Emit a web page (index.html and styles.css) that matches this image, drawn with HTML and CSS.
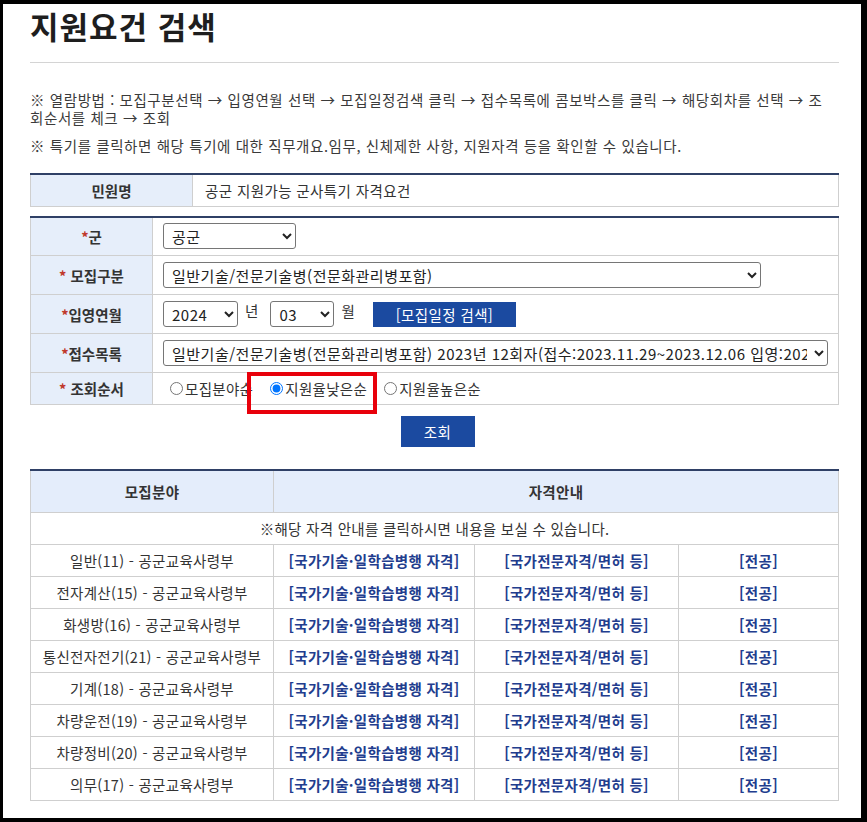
FILE: index.html
```html
<!DOCTYPE html>
<html lang="ko">
<head>
    <meta charset="UTF-8">
    <meta name="viewport" content="width=device-width, initial-scale=1.0">
    <title>지원요건 검색</title>
    <link rel="stylesheet" href="styles.css">
</head>
<body>
    <div class="frame">
        <div class="page">
            <h1>지원요건 검색</h1>
            <hr class="rule">

            <p class="note">※ 열람방법 : 모집구분선택 → 입영연월 선택 → 모집일정검색 클릭 → 접수목록에 콤보박스를 클릭 → 해당회차를 선택 → 조<br>회순서를 체크 → 조회</p>
            <p class="note note-gap">※ 특기를 클릭하면 해당 특기에 대한 직무개요.임무, 신체제한 사항, 지원자격 등을 확인할 수 있습니다.</p>

            <table class="tbl tbl-title">
                <tr>
                    <th class="th-title">민원명</th>
                    <td class="td-pad">공군 지원가능 군사특기 자격요건</td>
                </tr>
            </table>

            <table class="tbl tbl-form">
                <tr class="row-form">
                    <th class="th-form"><span class="req">*</span>군</th>
                    <td>
                        <select class="sel sel-gun">
                            <option>공군</option>
                        </select>
                    </td>
                </tr>
                <tr class="row-form">
                    <th class="th-form"><span class="req">*</span> 모집구분</th>
                    <td>
                        <select class="sel sel-gubun">
                            <option>일반기술/전문기술병(전문화관리병포함)</option>
                        </select>
                    </td>
                </tr>
                <tr class="row-form">
                    <th class="th-form"><span class="req">*</span>입영연월</th>
                    <td>
                        <select class="sel sel-year">
                            <option>2024</option>
                        </select>
                        <span class="unit">년</span>
                        <select class="sel sel-month">
                            <option>03</option>
                        </select>
                        <span class="unit">월</span>
                        <button class="btn btn-search">[모집일정 검색]</button>
                    </td>
                </tr>
                <tr class="row-form">
                    <th class="th-form"><span class="req">*</span>접수목록</th>
                    <td>
                        <select class="sel sel-list">
                            <option>일반기술/전문기술병(전문화관리병포함) 2023년 12회자(접수:2023.11.29~2023.12.06 입영:2024년03월)</option>
                        </select>
                    </td>
                </tr>
                <tr class="row-order">
                    <th class="th-form"><span class="req">*</span> 조회순서</th>
                    <td>
                        <label class="radio"><input type="radio" name="order">모집분야순</label>
                        <label class="radio"><input type="radio" name="order" checked>지원율낮은순</label>
                        <label class="radio"><input type="radio" name="order">지원율높은순</label>
                    </td>
                </tr>
            </table>

            <div class="btn-row">
                <button class="btn btn-go">조회</button>
            </div>

            <table class="tbl tbl-result">
                <colgroup>
                    <col class="c1"><col class="c2"><col class="c3"><col class="c4">
                </colgroup>
                <tr class="row-head">
                    <th>모집분야</th>
                    <th colspan="3">자격안내</th>
                </tr>
                <tr class="row-info">
                    <td colspan="4">※해당 자격 안내를 클릭하시면 내용을 보실 수 있습니다.</td>
                </tr>
                <tr class="row-data">
                    <td>일반(11) - 공군교육사령부</td>
                    <td><a href="#">[국가기술·일학습병행 자격]</a></td>
                    <td><a href="#">[국가전문자격/면허 등]</a></td>
                    <td><a href="#">[전공]</a></td>
                </tr>
                <tr class="row-data">
                    <td>전자계산(15) - 공군교육사령부</td>
                    <td><a href="#">[국가기술·일학습병행 자격]</a></td>
                    <td><a href="#">[국가전문자격/면허 등]</a></td>
                    <td><a href="#">[전공]</a></td>
                </tr>
                <tr class="row-data">
                    <td>화생방(16) - 공군교육사령부</td>
                    <td><a href="#">[국가기술·일학습병행 자격]</a></td>
                    <td><a href="#">[국가전문자격/면허 등]</a></td>
                    <td><a href="#">[전공]</a></td>
                </tr>
                <tr class="row-data">
                    <td>통신전자전기(21) - 공군교육사령부</td>
                    <td><a href="#">[국가기술·일학습병행 자격]</a></td>
                    <td><a href="#">[국가전문자격/면허 등]</a></td>
                    <td><a href="#">[전공]</a></td>
                </tr>
                <tr class="row-data">
                    <td>기계(18) - 공군교육사령부</td>
                    <td><a href="#">[국가기술·일학습병행 자격]</a></td>
                    <td><a href="#">[국가전문자격/면허 등]</a></td>
                    <td><a href="#">[전공]</a></td>
                </tr>
                <tr class="row-data">
                    <td>차량운전(19) - 공군교육사령부</td>
                    <td><a href="#">[국가기술·일학습병행 자격]</a></td>
                    <td><a href="#">[국가전문자격/면허 등]</a></td>
                    <td><a href="#">[전공]</a></td>
                </tr>
                <tr class="row-data">
                    <td>차량정비(20) - 공군교육사령부</td>
                    <td><a href="#">[국가기술·일학습병행 자격]</a></td>
                    <td><a href="#">[국가전문자격/면허 등]</a></td>
                    <td><a href="#">[전공]</a></td>
                </tr>
                <tr class="row-data">
                    <td>의무(17) - 공군교육사령부</td>
                    <td><a href="#">[국가기술·일학습병행 자격]</a></td>
                    <td><a href="#">[국가전문자격/면허 등]</a></td>
                    <td><a href="#">[전공]</a></td>
                </tr>
            </table>

            <!-- red highlight drawn over the order radio -->
            <div class="highlight"></div>
        </div>
    </div>
</body>
</html>
```

FILE: styles.css
```css
* {
    box-sizing: border-box;
}
body {
    margin: 0;
    font-family: "Noto Sans CJK KR", "Noto Sans", sans-serif;
    font-size: 14.5px;
    color: #333;
    background-color: #000;
}
.frame {
    width: 867px;
    height: 822px;
    border-style: solid;
    border-color: #000;
    border-width: 4px 6px 4px 3px;
    background-color: #fff;
    overflow: hidden;
}
.page {
    position: relative;
    padding: 0 22px 0 27px;
}
h1 {
    margin: 0;
    font-size: 31px;
    line-height: 44px;
    font-weight: bold;
    color: #1e1e1e;
    letter-spacing: 1px;
}
.rule {
    margin: 14px 0 0;
    border: none;
    border-top: 1px solid #d4d4d4;
    height: 0;
}
.note {
    margin: 28px 0 0;
    line-height: 18px;
    font-size: 14.5px;
    letter-spacing: 0.6px;
    color: #3a3a3a;
}
.note-gap {
    margin-top: 10px;
}
.tbl {
    width: 100%;
    border-collapse: collapse;
    border-top: 2px solid #2f4066;
}
.tbl th,
.tbl td {
    border: 1px solid #cfcfcf;
    border-top: none;
    padding: 0;
}
.tbl th {
    background-color: #e6eefa;
    font-weight: bold;
    text-align: center;
    color: #333;
}
.tbl-title {
    margin-top: 18px;
}
.tbl-title tr {
    height: 32px;
}
.th-title {
    width: 162px;
}
.td-pad {
    padding-left: 12px !important;
    letter-spacing: 0.4px;
}
.tbl-form {
    margin-top: 9px;
}
.row-form {
    height: 39px;
}
.row-order {
    height: 32px;
}
.th-form {
    width: 122px;
}
.tbl-form td {
    padding-left: 10px;
}
.req {
    color: #c0392b;
    font-weight: bold;
}
.sel {
    height: 26px;
    font-family: inherit;
    font-size: 15px;
    letter-spacing: 0.5px;
    color: #222;
    background-color: #fff;
    border: 1px solid #767676;
    border-radius: 3px;
    padding: 0 4px;
    vertical-align: middle;
}
.sel-gun {
    width: 133px;
}
.sel-gubun {
    width: 598px;
}
.sel-year {
    width: 75px;
}
.sel-month {
    width: 64px;
}
.sel-list {
    width: 665px;
}
.unit {
    display: inline-block;
    vertical-align: middle;
    margin: -8px 8px 0 3px;
    color: #333;
}
.btn {
    font-family: inherit;
    font-size: 14.5px;
    letter-spacing: 0.4px;
    color: #fff;
    background-color: #1b4aa0;
    border: none;
    border-radius: 0;
    cursor: pointer;
}
.btn-search {
    width: 143px;
    height: 25px;
    margin-left: 6px;
    vertical-align: middle;
    line-height: 25px;
    padding: 0;
}
.radio {
    display: inline-flex;
    align-items: center;
    margin-right: 6px;
    letter-spacing: 0.3px;
    color: #333;
}
.radio input {
    margin: 0 2px 0 7px;
    width: 13px;
    height: 13px;
}
.btn-row {
    text-align: center;
    margin-top: 11px;
    padding-left: 6px;
}
.btn-go {
    width: 74px;
    height: 31px;
    padding: 0;
}
.tbl-result {
    margin-top: 22px;
    text-align: center;
    letter-spacing: 0.3px;
}
.c1 { width: 243px; }
.c2 { width: 201px; }
.c3 { width: 204px; }
.c4 { width: 160px; }
.row-head {
    height: 42px;
}
.row-head th {
    background-color: #e4edfb;
}
.row-info {
    height: 32px;
}
.row-data {
    height: 32px;
}
.tbl-result a {
    color: #223d8e;
    font-weight: bold;
    text-decoration: none;
}
.highlight {
    position: absolute;
    left: 244px;
    top: 368px;
    width: 130px;
    height: 42px;
    border: 4px solid #e8000b;
}
```
